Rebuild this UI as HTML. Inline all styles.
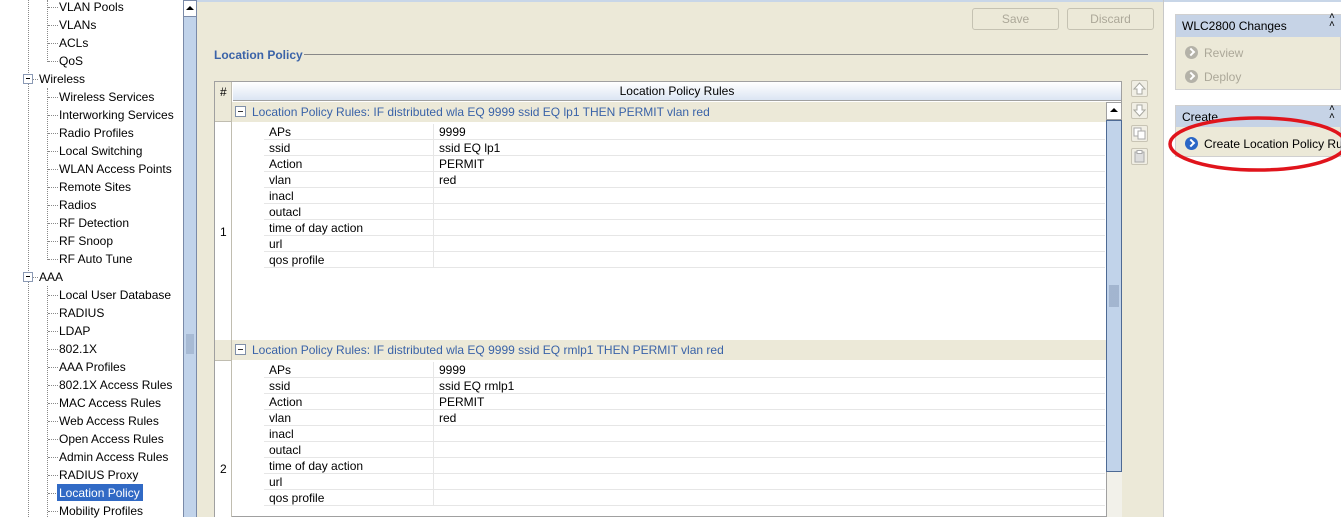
<!DOCTYPE html>
<html><head><meta charset="utf-8"><style>
*{margin:0;padding:0;box-sizing:border-box}
body{width:1341px;height:517px;overflow:hidden;position:relative;background:#fff;font-family:Tahoma,"Liberation Sans","DejaVu Sans",sans-serif;font-size:12px;color:#000}
.a{position:absolute}
.t{position:absolute;white-space:nowrap;line-height:18px;height:18px}
.dh{position:absolute;border-top:1px dotted #888;width:10px}
.row{position:absolute;left:264px;width:841px;height:16px;border-bottom:1px solid #e6e6e6;line-height:16px}
.row span{position:absolute;left:5px}
.row b{font-weight:normal;position:absolute;left:175px}
.row i{position:absolute;left:169px;top:0;bottom:0;border-left:1px solid #e6e6e6}
.gh{position:absolute;left:232px;width:874px;height:20px;background:#ECE9D8;color:#3a63a8;line-height:20px}
.mn{position:absolute;left:3px;top:4px;width:11px;height:11px;border:1px solid #7f8fa8;background:#fff}
.mn:after{content:"";position:absolute;left:2px;top:4px;width:5px;height:1px;background:#333}
.ib{position:absolute;left:1131px;width:17px;height:17px;border:1px solid #c8c4b4;border-radius:2px;background:#f0eee4}
.ar{position:absolute;width:13px;height:13px;border-radius:50%}
.ar:after{content:"";position:absolute;left:3px;top:3px;width:4px;height:4px;border-top:2px solid #fff;border-right:2px solid #fff;transform:rotate(45deg)}
</style></head><body>
<div class="a" style="left:0;top:0;width:183px;height:517px;background:#fff"></div>
<div class="a" style="left:28px;top:0;height:517px;border-left:1px dotted #888"></div>
<div class="a" style="left:47px;top:0;height:62px;border-left:1px dotted #888"></div>
<div class="a" style="left:47px;top:88px;height:172px;border-left:1px dotted #888"></div>
<div class="a" style="left:47px;top:286px;height:231px;border-left:1px dotted #888"></div>
<div id="tree"></div>
<div class="a" style="left:57px;top:484px;width:86px;height:17px;background:#316AC5"></div>
<div class="a" style="left:183px;top:0;width:14px;height:517px;background:#C1D3EA;border-left:1px solid #7a8aa8;border-right:1px solid #7a8aa8"></div>
<div class="a" style="left:183px;top:0;width:14px;height:17px;background:#fff;border:1px solid #7a8aa8"></div>
<div class="a" style="left:186px;top:6px;border-left:4px solid transparent;border-right:4px solid transparent;border-bottom:4px solid #000"></div>
<div class="a" style="left:186px;top:334px;width:8px;height:20px;background-image:radial-gradient(#6a7ea0 0.7px,transparent 0.8px);background-size:2px 2px"></div>
<div class="a" style="left:197px;top:0;width:966px;height:517px;background:#ECE9D8"></div>
<div class="a" style="left:197px;top:0;width:1144px;height:2px;background:#c8d6e8"></div>
<div class="a" style="left:972px;top:8px;width:87px;height:22px;border:1px solid #c5c2b2;border-radius:3px;color:#aca899;text-align:center;line-height:20px">Save</div>
<div class="a" style="left:1067px;top:8px;width:87px;height:22px;border:1px solid #c5c2b2;border-radius:3px;color:#aca899;text-align:center;line-height:20px">Discard</div>
<div class="t" style="left:214px;top:46px;color:#3a63a8;font-weight:bold;font-size:12px">Location Policy</div>
<div class="a" style="left:304px;top:54px;width:844px;border-top:1px solid #888"></div>
<div class="a" style="left:214px;top:81px;width:908px;height:436px;border:1px solid #a0a0a0;background:#fff"></div>
<div class="a" style="left:215px;top:82px;width:17px;height:435px;background:#ECE9D8;border-right:1px solid #c0bdb0"></div>
<div class="t" style="left:220px;top:83px">#</div>
<div class="a" style="left:233px;top:82px;width:888px;height:19px;background:linear-gradient(#fff,#dbe5f3);border-bottom:1px solid #a0a0a0;text-align:center;line-height:19px">Location Policy Rules</div>
<div class="a" style="left:215px;top:121px;width:17px;height:219px;background:#fff;border-right:1px solid #c0bdb0;border-top:1px solid #c0bdb0"></div>
<div class="a" style="left:215px;top:360px;width:17px;height:157px;background:#fff;border-right:1px solid #c0bdb0;border-top:1px solid #c0bdb0"></div>
<div class="t" style="left:220px;top:223px">1</div>
<div class="t" style="left:220px;top:460px">2</div>
<div class="gh" style="top:102px"><div class="mn"></div><span style="position:absolute;left:20px">Location Policy Rules: IF distributed wla EQ 9999 ssid EQ lp1 THEN PERMIT vlan red</span></div>
<div class="gh" style="top:340px"><div class="mn"></div><span style="position:absolute;left:20px">Location Policy Rules: IF distributed wla EQ 9999 ssid EQ rmlp1 THEN PERMIT vlan red</span></div>
<div id="rows"></div>
<div class="a" style="left:1106px;top:102px;width:16px;height:415px;background:#f2f1ea;border-left:1px solid #a0a0a0"></div>
<div class="a" style="left:1106px;top:102px;width:16px;height:18px;background:#fff;border:1px solid #a0a0a0"></div>
<div class="a" style="left:1110px;top:108px;border-left:4px solid transparent;border-right:4px solid transparent;border-bottom:4px solid #000"></div>
<div class="a" style="left:1106px;top:120px;width:16px;height:352px;background:#C1D3EA;border:1px solid #4e6a94"></div>
<div class="a" style="left:1109px;top:285px;width:10px;height:22px;background-image:radial-gradient(#5a6e90 0.7px,transparent 0.8px);background-size:2px 2px"></div>
<div class="ib" style="top:80px"><svg width="15" height="15"><path d="M7.5 2 L13 8 H10 V13 H5 V8 H2 Z" fill="#fff" stroke="#a8a8a0"/></svg></div>
<div class="ib" style="top:102px"><svg width="15" height="15"><path d="M7.5 13 L13 7 H10 V2 H5 V7 H2 Z" fill="#fff" stroke="#a8a8a0"/></svg></div>
<div class="ib" style="top:125px"><svg width="15" height="15"><rect x="2" y="2" width="7" height="8" fill="#fff" stroke="#aaa"/><rect x="6" y="5" width="7" height="8" fill="#fff" stroke="#aaa"/></svg></div>
<div class="ib" style="top:148px"><svg width="15" height="15"><rect x="3" y="3" width="9" height="10" fill="#ddd" stroke="#aaa"/><rect x="5" y="1.5" width="5" height="3" fill="#fff" stroke="#aaa"/></svg></div>
<div class="a" style="left:1163px;top:0;width:1px;height:517px;background:#c8c8c8"></div>
<div class="a" style="left:1175px;top:14px;width:166px;height:76px;background:#ECE9D8;border:1px solid #d0d0d0"></div>
<div class="a" style="left:1176px;top:15px;width:165px;height:22px;background:#C6D3E6"></div>
<div class="t" style="left:1182px;top:17px">WLC2800 Changes</div>
<div class="t" style="left:1329px;top:13px;font-size:10px;line-height:8px">&#708;<br>&#708;</div>
<div class="ar" style="left:1185px;top:46px;background:#b4b2a8"></div>
<div class="t" style="left:1204px;top:44px;color:#aca899">Review</div>
<div class="ar" style="left:1185px;top:70px;background:#b4b2a8"></div>
<div class="t" style="left:1204px;top:68px;color:#aca899">Deploy</div>
<div class="a" style="left:1175px;top:105px;width:166px;height:52px;background:#ECE9D8;border:1px solid #d0d0d0"></div>
<div class="a" style="left:1176px;top:106px;width:165px;height:21px;background:#C6D3E6"></div>
<div class="t" style="left:1182px;top:108px">Create</div>
<div class="t" style="left:1329px;top:105px;font-size:10px;line-height:8px">&#708;<br>&#708;</div>
<div class="ar" style="left:1185px;top:137px;background:#2a66c6"></div>
<div class="t" style="left:1204px;top:135px">Create Location Policy Rule</div>
<svg class="a" style="left:1160px;top:110px" width="200" height="70"><ellipse cx="98" cy="34" rx="88" ry="26" fill="none" stroke="#e0141c" stroke-width="3.5"/></svg>
<script>
var items=[["VLAN Pools",1],["VLANs",1],["ACLs",1],["QoS",1],["Wireless",0],["Wireless Services",1],["Interworking Services",1],["Radio Profiles",1],["Local Switching",1],["WLAN Access Points",1],["Remote Sites",1],["Radios",1],["RF Detection",1],["RF Snoop",1],["RF Auto Tune",1],["AAA",0],["Local User Database",1],["RADIUS",1],["LDAP",1],["802.1X",1],["AAA Profiles",1],["802.1X Access Rules",1],["MAC Access Rules",1],["Web Access Rules",1],["Open Access Rules",1],["Admin Access Rules",1],["RADIUS Proxy",1],["Location Policy",1],["Mobility Profiles",1]];
var h="";items.forEach(function(it,i){var y=-2+i*18;
if(it[1]){h+='<div class="dh" style="left:48px;top:'+(y+9)+'px"></div><div class="t" style="left:59px;top:'+y+'px;'+(it[0]=="Location Policy"?'color:#fff;z-index:2':'')+'">'+it[0]+'</div>';}
else{h+='<div class="dh" style="left:29px;top:'+(y+9)+'px;width:9px"></div><div class="a" style="left:23px;top:'+(y+4)+'px;width:10px;height:10px;border:1px solid #8a99b4;background:#fff"><div class="a" style="left:2px;top:3px;width:4px;height:1px;background:#000"></div></div><div class="t" style="left:39px;top:'+y+'px">'+it[0]+'</div>';}});
document.getElementById("tree").innerHTML=h;
var r=[["APs","9999"],["ssid","ssid EQ lp1"],["Action","PERMIT"],["vlan","red"],["inacl",""],["outacl",""],["time of day action",""],["url",""],["qos profile",""]];
var r2=r.map(function(x){return x.slice()});r2[1][1]="ssid EQ rmlp1";
var s="";[[124,r],[362,r2]].forEach(function(g){g[1].forEach(function(x,i){s+='<div class="row" style="top:'+(g[0]+i*16)+'px"><i></i><span>'+x[0]+'</span><b>'+x[1]+'</b></div>';});});
document.getElementById("rows").innerHTML=s;
</script>
</body></html>
